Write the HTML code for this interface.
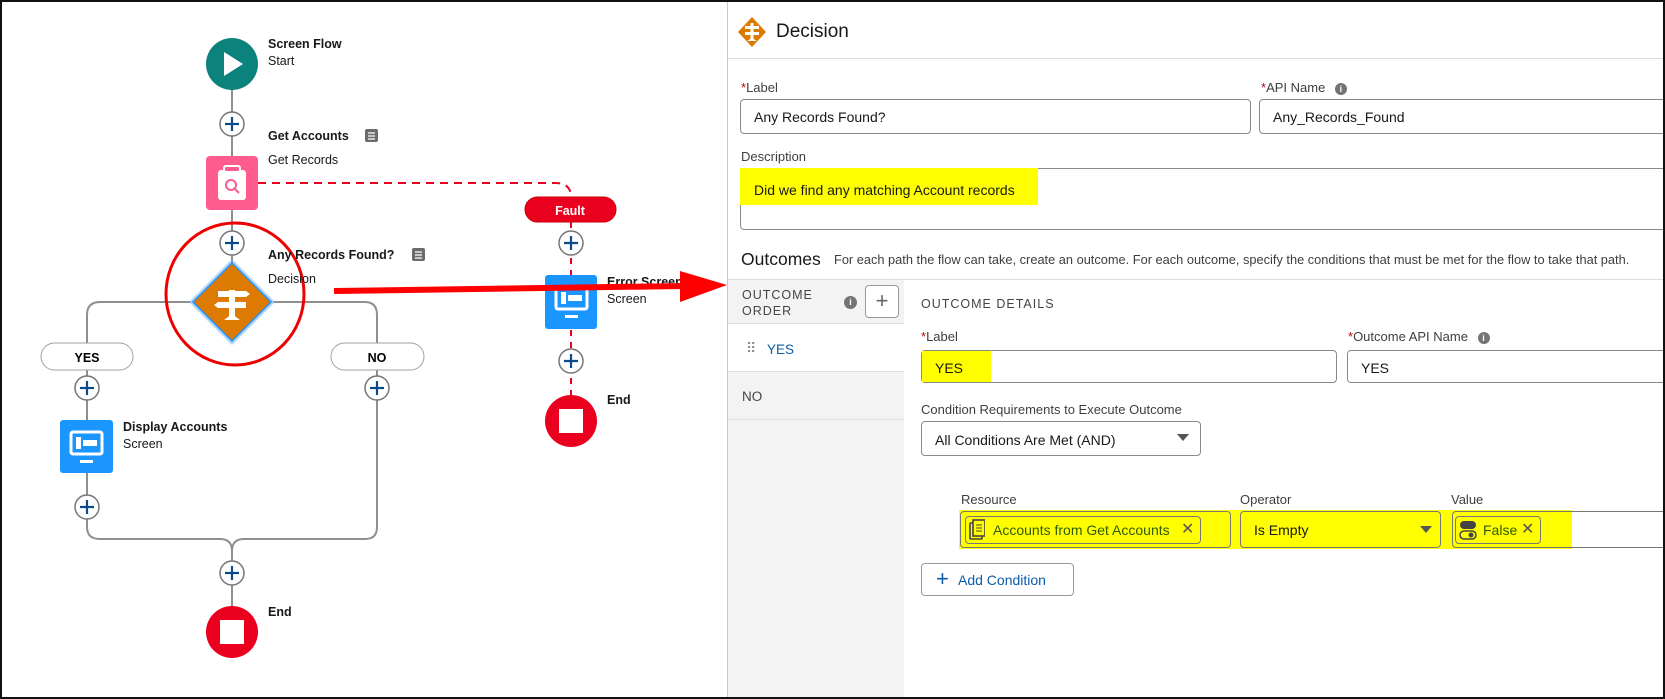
<!DOCTYPE html>
<html><head><meta charset="utf-8">
<style>
*{box-sizing:border-box;margin:0;padding:0}
body{width:1665px;height:699px;overflow:hidden;background:#fff;font-family:"Liberation Sans",sans-serif;color:#181818;position:relative}
.a{position:absolute;white-space:nowrap}
.inp{position:absolute;border:1px solid #8a8a8a;border-radius:4px;background:#fff}
.lbl{font-size:13px;color:#3e3e3c}
.req{color:#ba0517}
</style></head><body>
<svg class="a" style="left:0;top:0" width="727" height="699">
  <!-- gray connectors -->
  <g stroke="#8f8f8f" stroke-width="2" fill="none">
    <line x1="232" y1="89" x2="232" y2="156"/>
    <line x1="232" y1="210" x2="232" y2="263"/>
    <path d="M191 302 H100 Q87 302 87 315 V343"/>
    <path d="M273 302 H365 Q377 302 377 315 V343"/>
    <line x1="87" y1="370" x2="87" y2="420"/>
    <path d="M87 473 V527 Q87 539 100 539 H220 Q232 539 232 551 V607"/>
    <path d="M377 370 V527 Q377 539 365 539 H244 Q232 539 232 551"/>
  </g>
  <!-- red dashed fault -->
  <path d="M258 183 H555 Q571 183 571 197" stroke="#ea001e" stroke-width="2" stroke-dasharray="8 6" fill="none"/>
  <line x1="571" y1="222" x2="571" y2="396" stroke="#ea001e" stroke-width="2" stroke-dasharray="6 6"/>
  <!-- start -->
  <circle cx="232" cy="64" r="26" fill="#0b827c"/>
  <path d="M224 52 L243 64 L224 76 Z" fill="#fff"/>
  <!-- get records -->
  <rect x="206" y="156" width="52" height="54" rx="4" fill="#fe5c8e"/>
  <rect x="218" y="170" width="28" height="30" rx="3" fill="#fff"/>
  <rect x="224" y="166" width="16" height="6" rx="2" fill="#fe5c8e" stroke="#fff" stroke-width="2"/>
  <circle cx="231" cy="185" r="5" fill="none" stroke="#fe5c8e" stroke-width="2"/>
  <line x1="235" y1="189" x2="239" y2="193" stroke="#fe5c8e" stroke-width="2"/>
  <!-- decision -->
  <polygon points="232,259 275,302 232,345 189,302" fill="#7fb6f5" opacity="0.6"/>
  <polygon points="232,263 271,302 232,341 193,302" fill="#dd7a01" stroke="#1b96ff" stroke-width="1.5"/>
  <g fill="#fff"><rect x="229" y="290" width="6" height="30"/><path d="M218 291 H246 L250 294 L246 297 H218Z"/><path d="M246 302 H218 L214 305 L218 308 H246Z"/><path d="M224 320 L232 314 L240 320Z"/></g>
  <ellipse cx="235" cy="294" rx="69" ry="71" fill="none" stroke="#e00" stroke-width="3"/>
  <!-- pills -->
  <rect x="41" y="343" width="92" height="27" rx="13.5" fill="#fff" stroke="#a0a0a0"/>
  <text x="87" y="362" text-anchor="middle" font-family="Liberation Sans" font-weight="bold" font-size="12.5">YES</text>
  <rect x="331" y="343" width="93" height="27" rx="13.5" fill="#fff" stroke="#a0a0a0"/>
  <text x="377" y="362" text-anchor="middle" font-family="Liberation Sans" font-weight="bold" font-size="12.5">NO</text>
  <rect x="525" y="197" width="91" height="25" rx="12.5" fill="#ea001e" stroke="#c00" />
  <text x="570" y="215" text-anchor="middle" font-family="Liberation Sans" font-weight="bold" font-size="12.5" fill="#fff">Fault</text>
  <!-- screens -->
  <g>
    <rect x="60" y="420" width="53" height="53" rx="3" fill="#1b96ff"/>
    <rect x="71" y="432" width="31" height="22" rx="2" fill="none" stroke="#fff" stroke-width="3"/>
    <rect x="76" y="437" width="5" height="12" fill="#fff"/><rect x="83" y="440" width="14" height="6" fill="#fff"/>
    <rect x="80" y="460" width="13" height="3" fill="#fff"/>
  </g>
  <g>
    <rect x="545" y="275" width="52" height="54" rx="3" fill="#1b96ff"/>
    <rect x="556" y="287" width="31" height="22" rx="2" fill="none" stroke="#fff" stroke-width="3"/>
    <rect x="561" y="292" width="5" height="12" fill="#fff"/><rect x="568" y="295" width="14" height="6" fill="#fff"/>
    <rect x="565" y="315" width="13" height="3" fill="#fff"/>
  </g>
  <!-- ends -->
  <circle cx="232" cy="632" r="26" fill="#ea001e"/><rect x="220" y="620" width="24" height="24" fill="#fff"/>
  <circle cx="571" cy="421" r="26" fill="#ea001e"/><rect x="559" y="409" width="24" height="24" fill="#fff"/>
  <!-- plus circles -->
  <g id="pl">
  </g>
  <g stroke="#767676" stroke-width="1.5" fill="#fff">
    <circle cx="232" cy="124" r="12"/><circle cx="232" cy="243" r="12"/><circle cx="87" cy="388" r="12"/>
    <circle cx="377" cy="388" r="12"/><circle cx="87" cy="507" r="12"/><circle cx="232" cy="573" r="12"/>
    <circle cx="571" cy="243" r="12"/><circle cx="571" cy="361" r="12"/>
  </g>
  <g stroke="#0b4a8b" stroke-width="2.2">
    <path d="M225 124h14M232 117v14"/><path d="M225 243h14M232 236v14"/><path d="M80 388h14M87 381v14"/>
    <path d="M370 388h14M377 381v14"/><path d="M80 507h14M87 500v14"/><path d="M225 573h14M232 566v14"/>
    <path d="M564 243h14M571 236v14"/><path d="M564 361h14M571 354v14"/>
  </g>
  <!-- text -->
  <g font-family="Liberation Sans" font-size="12.5" fill="#181818">
    <text x="268" y="48" font-weight="bold">Screen Flow</text><text x="268" y="65">Start</text>
    <text x="268" y="140" font-weight="bold">Get Accounts</text><text x="268" y="164">Get Records</text>
    <text x="268" y="259" font-weight="bold">Any Records Found?</text><text x="268" y="283">Decision</text>
    <text x="123" y="431" font-weight="bold">Display Accounts</text><text x="123" y="448">Screen</text>
    <text x="607" y="286" font-weight="bold">Error Screen</text><text x="607" y="303">Screen</text>
    <text x="607" y="404" font-weight="bold">End</text>
    <text x="268" y="616" font-weight="bold">End</text>
  </g>
  <g fill="#6b6b6b"><rect x="365" y="129" width="13" height="13" rx="2"/><rect x="412" y="248" width="13" height="13" rx="2"/></g>
  <g stroke="#fff" stroke-width="1.3"><path d="M368 133h7M368 136h7M368 139h7M415 252h7M415 255h7M415 258h7"/></g>
</svg>
<!-- right panel -->
<div class="a" style="left:727px;top:0;width:938px;height:699px;background:#fff;border-left:1px solid #c9c9c9"></div>
<svg class="a" style="left:0;top:0" width="730" height="699"><line x1="334" y1="291" x2="684" y2="286" stroke="#f00" stroke-width="6"/><polygon points="680,271 727,285 680,302" fill="#f00"/></svg>
<svg class="a" style="left:738px;top:17px" width="28" height="30"><polygon points="14,0 28,15 14,30 0,15" fill="#dd7a01"/><g fill="#fff"><rect x="12.5" y="6" width="3" height="17"/><rect x="7" y="9" width="14" height="3"/><rect x="7" y="15" width="14" height="3"/><path d="M9 24h10l-5-3z"/></g></svg>
<div class="a" style="left:776px;top:21px;font-size:19px">Decision</div>
<div class="a" style="left:728px;top:58px;width:937px;height:1px;background:#dcdcdc"></div>
<div class="a lbl" style="left:741px;top:80px"><span class="req">*</span>Label</div>
<div class="a lbl" style="left:1261px;top:80px"><span class="req">*</span>API Name <span style="display:inline-block;width:12px;height:12px;border-radius:6px;background:#747474;color:#fff;font-size:9px;text-align:center;line-height:12px;font-weight:bold;margin-left:6px">i</span></div>
<div class="inp" style="left:740px;top:99px;width:511px;height:35px"></div>
<div class="a" style="left:754px;top:109px;font-size:14px">Any Records Found?</div>
<div class="inp" style="left:1259px;top:99px;width:420px;height:35px"></div>
<div class="a" style="left:1273px;top:109px;font-size:14px">Any_Records_Found</div>
<div class="a lbl" style="left:741px;top:149px">Description</div>
<div class="inp" style="left:740px;top:168px;width:940px;height:62px"></div>
<div class="a" style="left:740px;top:168px;width:298px;height:37px;background:#ffff00"></div>
<div class="a" style="left:754px;top:182px;font-size:14px">Did we find any matching Account records</div>
<div class="a" style="left:741px;top:249px;font-size:17.5px">Outcomes</div>
<div class="a" style="left:834px;top:252px;font-size:12.8px;color:#3e3e3c">For each path the flow can take, create an outcome. For each outcome, specify the conditions that must be met for the flow to take that path.</div>
<div class="a" style="left:728px;top:279px;width:937px;height:1px;background:#dcdcdc"></div>
<div class="a" style="left:728px;top:280px;width:176px;height:419px;background:#f3f3f3"></div>
<div class="a" style="left:742px;top:287px;font-size:12.5px;letter-spacing:1px;color:#444;line-height:16px;white-space:normal">OUTCOME<br>ORDER</div>
<div class="a" style="left:844px;top:296px;width:13px;height:13px;border-radius:7px;background:#747474;color:#fff;font-size:9px;text-align:center;line-height:13px;font-weight:bold">i</div>
<div class="a" style="left:865px;top:285px;width:34px;height:33px;border:1px solid #999;border-radius:4px;background:#fff;font-size:22px;text-align:center;line-height:30px;color:#666">+</div>
<div class="a" style="left:728px;top:323px;width:176px;height:49px;background:#fff;border-top:1px solid #ddd;border-bottom:1px solid #ddd"></div>
<div class="a" style="left:746px;top:340px;font-size:14px;color:#888;letter-spacing:-1px">⠿</div>
<div class="a" style="left:767px;top:342px;font-size:13.5px;color:#0b5cab">YES</div>
<div class="a" style="left:742px;top:389px;font-size:13.5px;color:#444">NO</div>
<div class="a" style="left:728px;top:419px;width:176px;height:1px;background:#ddd"></div>
<div class="a" style="left:921px;top:297px;font-size:12.5px;letter-spacing:1px;color:#444">OUTCOME DETAILS</div>
<div class="a lbl" style="left:921px;top:329px"><span class="req">*</span>Label</div>
<div class="a lbl" style="left:1348px;top:329px"><span class="req">*</span>Outcome API Name <span style="display:inline-block;width:12px;height:12px;border-radius:6px;background:#747474;color:#fff;font-size:9px;text-align:center;line-height:12px;font-weight:bold;margin-left:6px">i</span></div>
<div class="inp" style="left:921px;top:350px;width:416px;height:33px"></div>
<div class="a" style="left:922px;top:351px;width:69px;height:31px;background:#ffff00"></div>
<div class="a" style="left:935px;top:360px;font-size:14px">YES</div>
<div class="inp" style="left:1347px;top:350px;width:330px;height:33px"></div>
<div class="a" style="left:1361px;top:360px;font-size:14px">YES</div>
<div class="a lbl" style="left:921px;top:402px">Condition Requirements to Execute Outcome</div>
<div class="inp" style="left:921px;top:421px;width:280px;height:35px"></div>
<div class="a" style="left:935px;top:432px;font-size:14px">All Conditions Are Met (AND)</div>
<div class="a" style="left:1177px;top:434px;width:0;height:0;border-left:6px solid transparent;border-right:6px solid transparent;border-top:7px solid #555"></div>
<div class="a lbl" style="left:961px;top:492px">Resource</div>
<div class="a lbl" style="left:1240px;top:492px">Operator</div>
<div class="a lbl" style="left:1451px;top:492px">Value</div>
<div class="a" style="left:959px;top:510px;width:613px;height:39px;background:#ffff00"></div>
<div class="inp" style="left:960px;top:511px;width:271px;height:37px;background:transparent;border-color:#777"></div>
<div class="inp" style="left:965px;top:516px;width:236px;height:28px;background:transparent;border-color:#777"></div>
<svg class="a" style="left:969px;top:519px" width="16" height="22"><rect x="1" y="4" width="12" height="16" rx="1" fill="none" stroke="#444" stroke-width="1.6"/><rect x="4" y="1" width="12" height="16" fill="#ffff00" stroke="#444" stroke-width="1.6"/><path d="M7 6h6M7 9h6M7 12h6" stroke="#444"/></svg>
<div class="a" style="left:993px;top:522px;font-size:14px;color:#2e5c00">Accounts from Get Accounts</div>
<div class="a" style="left:1181px;top:519px;font-size:16px;color:#555">✕</div>
<div class="inp" style="left:1240px;top:511px;width:201px;height:37px;background:transparent;border-color:#777"></div>
<div class="a" style="left:1254px;top:522px;font-size:14px">Is Empty</div>
<div class="a" style="left:1420px;top:526px;width:0;height:0;border-left:6px solid transparent;border-right:6px solid transparent;border-top:7px solid #555"></div>
<div class="inp" style="left:1452px;top:511px;width:230px;height:37px;background:transparent;border-color:#777"></div>
<div class="inp" style="left:1455px;top:516px;width:86px;height:28px;background:transparent;border-color:#777"></div>
<svg class="a" style="left:1459px;top:519px" width="18" height="22"><rect x="1" y="2" width="16" height="8" rx="4" fill="#444"/><rect x="1" y="12" width="16" height="8" rx="4" fill="none" stroke="#444" stroke-width="1.5"/><circle cx="12" cy="16" r="2.5" fill="#444"/></svg>
<div class="a" style="left:1483px;top:522px;font-size:14px;color:#2e5c00">False</div>
<div class="a" style="left:1521px;top:519px;font-size:16px;color:#555">✕</div>
<div class="inp" style="left:921px;top:563px;width:153px;height:33px;border-color:#999"></div>
<div class="a" style="left:936px;top:566px;font-size:22px;color:#0b5cab;font-weight:300">+</div>
<div class="a" style="left:958px;top:572px;font-size:14px;color:#0b5cab">Add Condition</div>
<div class="a" style="left:0;top:0;width:1665px;height:699px;border:2px solid #111"></div>
</body></html>
